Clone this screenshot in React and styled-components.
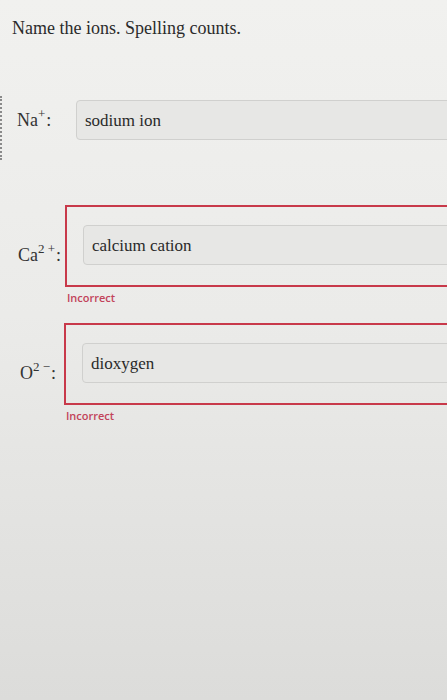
import React from 'react'
import styled, { createGlobalStyle } from 'styled-components'

const Global = createGlobalStyle`
  html, body {
    margin: 0;
    padding: 0;
  }
  body {
    background: linear-gradient(180deg, #f1f1ef 0%, #ebebe9 45%, #dcdcda 100%);
    min-height: 700px;
    font-family: "Liberation Serif", "Times New Roman", serif;
    color: #2e2e2e;
    overflow: hidden;
  }
`

const Page = styled.div`
  width: 447px;
  height: 700px;
  overflow: hidden;
  display: flex;
`

const Gutter = styled.div`
  width: 4px;
  flex: none;
  display: flex;
  flex-direction: column;
  align-items: flex-start;
`

const GutterMark = styled.div`
  margin-top: ${p => p.top}px;
  height: ${p => p.h}px;
  width: 2px;
  border-left: 2px dotted #8a8a8a;
`

const Main = styled.div`
  flex: 1;
  min-width: 0;
  padding-top: 17px;
`

const Title = styled.div`
  font-size: 18px;
  line-height: 22px;
  padding-left: 8px;
  color: #2b2b2b;
`

const Questions = styled.div`
  margin-top: 61px;
  display: flex;
  flex-direction: column;
`

const Row = styled.div`
  display: flex;
  align-items: center;
  margin-top: ${p => p.gap || 0}px;
`

const Label = styled.div`
  width: ${p => p.w}px;
  flex: none;
  padding-left: ${p => p.pad}px;
  box-sizing: border-box;
  font-size: 18px;
  color: #333;
  white-space: nowrap;
`

const Sup = styled.sup`
  font-size: 13px;
  vertical-align: 8px;
  line-height: 0;
  margin-right: 1px;
`

const Field = styled.div`
  flex: 1;
  margin-right: -20px;
  display: flex;
  flex-direction: column;
`

const ErrorBox = styled.div`
  border: 2px solid #c8394a;
  padding: 18px 0 20px 16px;
  display: flex;
`

const Input = styled.div`
  flex: 1 1 auto;
  height: 40px;
  box-sizing: border-box;
  background: #e7e7e5;
  border: 1px solid #d0d0ce;
  border-radius: 4px;
  display: flex;
  align-items: center;
  padding: 2px 0 0 8px;
  font-size: 17px;
  color: #2a2a2a;
`

const Incorrect = styled.div`
  font-family: "Open Sans", "Liberation Sans", sans-serif;
  font-size: 11px;
  font-weight: 600;
  color: #c2435a;
  margin-top: 3px;
  padding-left: 2px;
`

export default function App() {
  return (
    <Page>
      <Global />
      <Gutter>
        <GutterMark top={96} h={64} />
      </Gutter>
      <Main>
        <Title>Name the ions. Spelling counts.</Title>
        <Questions>
          <Row>
            <Label w={72} pad={13}>
              Na<Sup>+</Sup>:
            </Label>
            <Field>
              <Input>sodium ion</Input>
            </Field>
          </Row>
          <Row gap={65}>
            <Label w={61} pad={14}>
              Ca<Sup>2 +</Sup>:
            </Label>
            <Field>
              <ErrorBox>
                <Input>calcium cation</Input>
              </ErrorBox>
              <Incorrect>Incorrect</Incorrect>
            </Field>
          </Row>
          <Row gap={18}>
            <Label w={60} pad={16}>
              O<Sup>2 −</Sup>:
            </Label>
            <Field>
              <ErrorBox>
                <Input>dioxygen</Input>
              </ErrorBox>
              <Incorrect>Incorrect</Incorrect>
            </Field>
          </Row>
        </Questions>
      </Main>
    </Page>
  )
}
